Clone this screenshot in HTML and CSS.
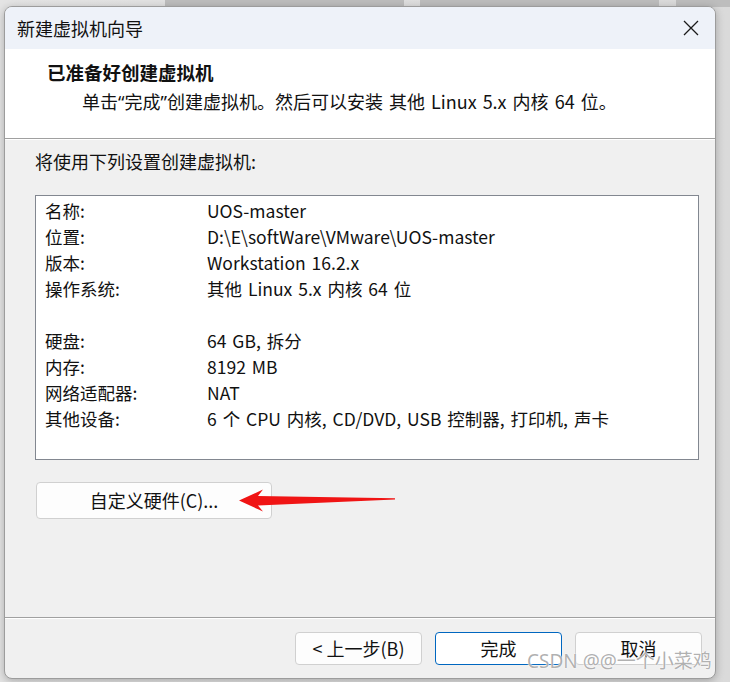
FILE: index.html
```html
<!DOCTYPE html>
<html lang="zh-CN">
<head>
<meta charset="utf-8">
<title>新建虚拟机向导</title>
<link rel="stylesheet" href="styles.css">
</head>
<body>
<div class="desktop">
  <div class="bg-window bg-a"></div>
  <div class="bg-window bg-b"></div>
  <div class="bg-window bg-c"></div>

  <div class="window">
    <div class="titlebar">
      <span class="title">新建虚拟机向导</span>
      <svg class="close" width="16" height="16" viewBox="0 0 16 16"><path d="M1 1 L15 15 M15 1 L1 15" stroke="#1a1a1a" stroke-width="1.3" fill="none"/></svg>
    </div>
    <div class="header">
      <div class="h-title">已准备好创建虚拟机</div>
      <div class="h-sub">单击<span class="q">“</span>完成<span class="q">”</span>创建虚拟机。然后可以安装 其他 Linux 5.x 内核 64 位。</div>
    </div>
    <div class="sep"></div>
    <div class="body">
      <div class="intro">将使用下列设置创建虚拟机:</div>
      <div class="listbox">
        <div class="row"><span class="k">名称:</span><span class="v">UOS-master</span></div>
        <div class="row"><span class="k">位置:</span><span class="v">D:\E\softWare\VMware\UOS-master</span></div>
        <div class="row"><span class="k">版本:</span><span class="v">Workstation 16.2.x</span></div>
        <div class="row"><span class="k">操作系统:</span><span class="v">其他 Linux 5.x 内核 64 位</span></div>
        <div class="row"></div>
        <div class="row"><span class="k">硬盘:</span><span class="v">64 GB, 拆分</span></div>
        <div class="row"><span class="k">内存:</span><span class="v">8192 MB</span></div>
        <div class="row"><span class="k">网络适配器:</span><span class="v">NAT</span></div>
        <div class="row"><span class="k">其他设备:</span><span class="v">6 个 CPU 内核, CD/DVD, USB 控制器, 打印机, 声卡</span></div>
      </div>
      <button class="btn custom">自定义硬件(C)...</button>
    </div>
    <div class="sep"></div>
    <div class="footer">
      <button class="btn nav">&lt; 上一步(B)</button>
      <button class="btn nav primary">完成</button>
      <button class="btn nav">取消</button>
    </div>
  </div>

  <svg class="arrow" width="730" height="682" viewBox="0 0 730 682">
    <polygon points="239,500.5 263,489.5 258,496 395,498.3 395,499.6 258,505.5 263,511.5" fill="#f01414"/>
  </svg>

  <div class="watermark">CSDN @@一个小菜鸡</div>
</div>
</body>
</html>
```

FILE: styles.css
```css
* { box-sizing: border-box; }

html, body {
  margin: 0;
  padding: 0;
}

body {
  font-family: "Noto Sans CJK SC", "Noto Sans", sans-serif;
  color: #000;
}

.desktop {
  position: relative;
  width: 730px;
  height: 682px;
  overflow: hidden;
  background: linear-gradient(to right, #e4e4e4 0%, #dadada 100%);
  padding: 6px 0 0 4px;
}

.bg-window {
  position: absolute;
  top: 0;
  height: 7px;
  background: #bdbdbd;
}
.bg-a { left: 165px; width: 239px; }
.bg-b { left: 420px; width: 239px; }
.bg-c { left: 676px; width: 60px; }

.window {
  position: relative;
  width: 712px;
  height: 673px;
  border: 1px solid #9c9c9c;
  border-radius: 8px;
  overflow: hidden;
  background: #f0f0f0;
  box-shadow: 0 2px 8px rgba(0,0,0,0.25);
  display: flex;
  flex-direction: column;
}

.titlebar {
  height: 42px;
  flex: none;
  background: #eef2f9;
  display: flex;
  align-items: center;
  justify-content: space-between;
  padding: 0 16px 0 12px;
}

.title {
  font-size: 18px;
  line-height: 26px;
  color: #111;
}

.close { display: block; }

.header {
  height: 89px;
  flex: none;
  background: #fff;
  padding: 10px 0 0 42px;
}

.h-title {
  font-size: 18.5px;
  font-weight: 700;
  line-height: 26px;
  color: #111;
}

.h-sub {
  font-size: 18px;
  line-height: 26px;
  margin-top: 3px;
  padding-left: 35px;
  color: #111;
  word-spacing: 2px;
  white-space: nowrap;
}

.q {
  font-family: "Noto Sans", "Liberation Sans", sans-serif;
}

.sep {
  flex: none;
  height: 2px;
  border-top: 1px solid #a0a0a0;
  border-bottom: 1px solid #ffffff;
}

.body {
  flex: 1;
  padding: 8px 16px 0 30px;
}

.intro {
  font-size: 18px;
  line-height: 26px;
  color: #111;
}

.listbox {
  margin-top: 21px;
  width: 664px;
  height: 265px;
  background: #fff;
  border: 1px solid #828790;
  padding: 2px 0 0 9px;
}

.row {
  height: 26px;
  display: flex;
  font-size: 17.5px;
  line-height: 26px;
  color: #111;
  word-spacing: 2px;
}

.k { width: 162px; flex: none; }

.btn {
  font-family: "Noto Sans CJK SC", "Noto Sans", sans-serif;
  background: #fdfdfd;
  border: 1px solid #d0d0d0;
  border-radius: 4px;
  color: #111;
  padding: 0;
  font-size: 18px;
}

.custom {
  display: block;
  margin-top: 22px;
  margin-left: 1px;
  width: 236px;
  height: 37px;
  line-height: 35px;
}

.footer {
  flex: none;
  height: 59px;
  display: flex;
  justify-content: flex-end;
  gap: 13px;
  padding: 13px 13px 0 0;
}

.nav {
  width: 127px;
  height: 33px;
  line-height: 31px;
}

.primary {
  background: #fff;
  border: 1px solid #0067c0;
}

.arrow {
  position: absolute;
  left: 0;
  top: 0;
  pointer-events: none;
}

.watermark {
  position: absolute;
  left: 527px;
  top: 648px;
  font-family: "Noto Sans", "Noto Sans CJK SC", sans-serif;
  font-size: 19px;
  line-height: 26px;
  color: rgba(110,110,110,0.55);
  text-shadow: 0 0 2px #fff, 0 0 1px #fff;
  white-space: nowrap;
  pointer-events: none;
}
```
